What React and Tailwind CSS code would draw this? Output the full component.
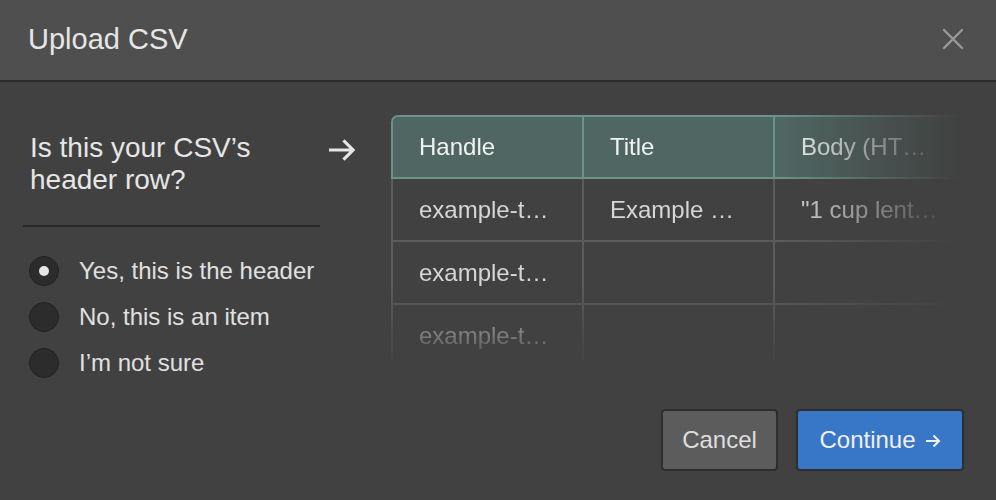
import React from "react";

const font = { fontFamily: '"Liberation Sans", Arial, sans-serif' };

function Radio({ checked, label }) {
  return (
    <div className="flex items-center h-[46px]">
      <div className="w-[30px] h-[30px] rounded-full bg-[#2c2c2c] border border-[#222] flex items-center justify-center shrink-0">
        {checked && <div className="w-[10px] h-[10px] rounded-full bg-[#e6e6e6]" />}
      </div>
      <span className="ml-[20px] text-[24px] text-[#e0e0e0] leading-none">{label}</span>
    </div>
  );
}

function HeadCell({ children, last }) {
  return (
    <div className={"w-[191px] h-[60px] flex items-center pl-[26px] text-[24px] text-[#f2f2f2] shrink-0 whitespace-nowrap " + (last ? "" : "border-r-2 border-[#6a938b]")}>
      {children}
    </div>
  );
}

function Cell({ children, last }) {
  return (
    <div className={"w-[191px] h-[61px] flex items-center pl-[26px] text-[24px] text-[#d6d6d6] shrink-0 whitespace-nowrap " + (last ? "" : "border-r-2 border-[#5c5c5c]")}>
      {children}
    </div>
  );
}

export default function App() {
  return (
    <div style={font} className="w-[996px] h-[500px] bg-[#414141] flex flex-col overflow-hidden">
      <div className="h-[82px] bg-[#4f4f4f] border-b-2 border-[#2a2a2a] flex items-center justify-between pl-[28px] pr-[32px] shrink-0">
        <span className="text-[29px] text-[#e6e6e6] leading-none mt-[-2px]">Upload CSV</span>
        <svg width="22" height="22" viewBox="0 0 22 22" className="mt-[-2px]">
          <path d="M2 2 L20 20 M20 2 L2 20" stroke="#9a9a9a" strokeWidth="2.4" strokeLinecap="round" />
        </svg>
      </div>

      <div className="flex">
        <div className="ml-[23px] w-[297px] pt-[50px] shrink-0">
          <div className="px-[7px] text-[28px] leading-[32px] text-[#e6e6e6] whitespace-nowrap">
            Is this your CSV’s<br />header row?
          </div>
          <div className="mt-[29px] h-[2px] bg-[#2a2a2a]" />
          <div className="mt-[21px] pl-[6px] flex flex-col">
            <Radio checked label="Yes, this is the header" />
            <Radio label="No, this is an item" />
            <Radio label="I’m not sure" />
          </div>
        </div>

        <div className="pt-[55px] pl-[8px] w-[71px] shrink-0">
          <svg width="29" height="26" viewBox="0 0 30 26">
            <path d="M1 13 H26 M16 3 L26 13 L16 23" stroke="#e6e6e6" strokeWidth="3.2" fill="none" />
          </svg>
        </div>

        <div className="mt-[33px] w-[575px] h-[252px] overflow-hidden [mask-image:linear-gradient(to_right,black_68%,transparent_99%),linear-gradient(to_bottom,black_68%,transparent_100%)] [mask-composite:intersect]">
          <div className="flex flex-col w-[577px]">
            <div className="flex bg-[#4f6662] border-2 border-[#6a938b] rounded-tl-[7px]">
              <HeadCell>Handle</HeadCell>
              <HeadCell>Title</HeadCell>
              <HeadCell last>Body (HT…</HeadCell>
            </div>
            <div className="flex border-l-2 border-b-2 border-[#5c5c5c]">
              <Cell>example-t…</Cell>
              <Cell>Example …</Cell>
              <Cell last>"1 cup lent…</Cell>
            </div>
            <div className="flex border-l-2 border-b-2 border-[#5c5c5c]">
              <Cell>example-t…</Cell>
              <Cell></Cell>
              <Cell last></Cell>
            </div>
            <div className="flex border-l-2 border-[#5c5c5c]">
              <Cell>example-t…</Cell>
              <Cell></Cell>
              <Cell last></Cell>
            </div>
          </div>
        </div>
      </div>

      <div className="flex justify-end gap-[18px] pr-[32px] mt-auto mb-[29px]">
        <button className="w-[117px] h-[62px] rounded-[4px] bg-[#5c5c5c] border-2 border-[#2e2e2e] text-[24px] text-[#dedede]">
          Cancel
        </button>
        <button className="w-[168px] h-[62px] rounded-[4px] bg-[#3877c8] border-2 border-[#2e2e2e] text-[24px] text-[#f0f0f0] flex items-center justify-center gap-[9px]">
          Continue
          <svg width="16" height="16" viewBox="0 0 16 16" className="mt-[1px]">
            <path d="M1 8 H14 M8.5 2.5 L14 8 L8.5 13.5" stroke="#f0f0f0" strokeWidth="2" fill="none" />
          </svg>
        </button>
      </div>
    </div>
  );
}
